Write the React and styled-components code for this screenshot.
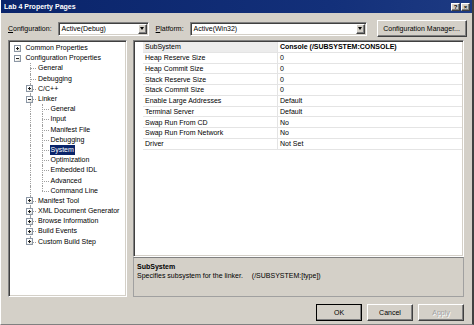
import React from 'react';
import styled, { createGlobalStyle, css } from 'styled-components';

const GlobalStyle = createGlobalStyle`
html, body {
  margin: 0;
  padding: 0;
  background: #d4d0c8;
}
body {
  font-family: "Liberation Sans", Arial, sans-serif;
  font-size: 7px;
  color: #000;
}
`;

const face = '#d4d0c8';

const raised = css`
  border: 1px solid;
  border-color: #fff #404040 #404040 #fff;
  box-shadow: inset -1px -1px 0 #808080, inset 1px 1px 0 ${face};
`;
const sunken = css`
  border: 1px solid;
  border-color: #808080 #fff #fff #808080;
  box-shadow: inset 1px 1px 0 #404040, inset -1px -1px 0 ${face};
`;

const tree = [
  { label: 'Common Properties', closed: true },
  {
    label: 'Configuration Properties',
    children: [
      { label: 'General' },
      { label: 'Debugging' },
      { label: 'C/C++', closed: true },
      {
        label: 'Linker',
        children: [
          { label: 'General' },
          { label: 'Input' },
          { label: 'Manifest File' },
          { label: 'Debugging' },
          { label: 'System', selected: true },
          { label: 'Optimization' },
          { label: 'Embedded IDL' },
          { label: 'Advanced' },
          { label: 'Command Line' },
        ],
      },
      { label: 'Manifest Tool', closed: true },
      { label: 'XML Document Generator', closed: true },
      { label: 'Browse Information', closed: true },
      { label: 'Build Events', closed: true },
      { label: 'Custom Build Step', closed: true },
    ],
  },
];

// flatten nodes into rows, keeping which ancestor columns still carry a line
const flatten = (nodes, level = 0, carry = [], out = []) => {
  nodes.forEach((n, i) => {
    const last = i === nodes.length - 1;
    out.push({ ...n, level, carry, last });
    if (n.children) flatten(n.children, level + 1, [...carry, !last], out);
  });
  return out;
};
const rows = flatten(tree);

const props = [
  ['SubSystem', 'Console (/SUBSYSTEM:CONSOLE)'],
  ['Heap Reserve Size', '0'],
  ['Heap Commit Size', '0'],
  ['Stack Reserve Size', '0'],
  ['Stack Commit Size', '0'],
  ['Enable Large Addresses', 'Default'],
  ['Terminal Server', 'Default'],
  ['Swap Run From CD', 'No'],
  ['Swap Run From Network', 'No'],
  ['Driver', 'Not Set'],
];

const Window = styled.div`
  width: 474px;
  height: 325px;
  box-sizing: border-box;
  display: flex;
  flex-direction: column;
  background: ${face};
  border-left: 1px solid #fff;
  border-right: 2px solid #404040;
  border-bottom: 1px solid #808080;
`;
const TitleBar = styled.div`
  height: 13px;
  flex: none;
  display: flex;
  align-items: center;
  padding: 0 2px 0 3px;
  background: linear-gradient(90deg, #0a246a 0%, #13307a 70%, #1d3a82 100%);
  color: #fff;
  font-weight: bold;
`;
const TitleText = styled.span`
  flex: 1;
`;
const CapButton = styled.span`
  width: 9px;
  height: 8px;
  margin-left: 1px;
  box-sizing: border-box;
  background: ${face};
  ${raised};
  color: #000;
  font-size: 6px;
  font-weight: bold;
  line-height: 6px;
  text-align: center;
`;
const ConfigRow = styled.div`
  display: flex;
  align-items: center;
  height: 17px;
  margin-top: 7px;
  padding-left: 7px;
`;
const Label = styled.span`
  margin-right: ${p => p.$gap}px;
  u { text-decoration: underline; }
`;
const Combo = styled.div`
  width: ${p => p.$w}px;
  height: 14px;
  box-sizing: border-box;
  background: #fff;
  ${sunken};
  display: flex;
  align-items: center;
  padding: 0 1px 0 3px;
  margin-right: ${p => p.$gap}px;
`;
const ComboText = styled.span`
  flex: 1;
`;
const ComboArrow = styled.span`
  width: 9px;
  height: 10px;
  box-sizing: border-box;
  background: ${face};
  ${raised};
  display: flex;
  align-items: center;
  justify-content: center;
  &::after {
    content: '';
    border-left: 2.5px solid transparent;
    border-right: 2.5px solid transparent;
    border-top: 3px solid #000;
  }
`;
const Button = styled.div`
  width: ${p => p.$w}px;
  height: 17px;
  box-sizing: border-box;
  background: ${face};
  ${raised};
  ${p => p.$default && css`
    outline: 1px solid #000;
    outline-offset: -1px;
  `};
  display: flex;
  align-items: center;
  justify-content: center;
  color: ${p => (p.$disabled ? '#a0a0a0' : '#000')};
  text-shadow: ${p => (p.$disabled ? '1px 1px 0 #fff' : 'none')};
`;
const Main = styled.div`
  display: flex;
  gap: 6px;
  height: 257px;
  margin-top: 3px;
  padding: 0 8px 0 7px;
`;
const TreePane = styled.div`
  width: 119px;
  flex: none;
  box-sizing: border-box;
  background: #fff;
  ${sunken};
  padding: 2px 0 0 2px;
`;
const TreeRow = styled.div`
  display: flex;
  align-items: center;
  height: 10.2px;
`;
const Guide = styled.span`
  position: relative;
  width: 12.5px;
  height: 100%;
  flex: none;
  display: flex;
  align-items: center;
  justify-content: center;
  &::before {
    content: ${p => (p.$v ? "''" : 'none')};
    position: absolute;
    left: 6px;
    top: 0;
    bottom: ${p => (p.$v === 'top' ? '50%' : '0')};
    border-left: 1px dotted #a0a0a0;
  }
  &::after {
    content: ${p => (p.$h ? "''" : 'none')};
    position: absolute;
    left: 6px;
    right: 0;
    top: 50%;
    border-top: 1px dotted #a0a0a0;
  }
`;
const Expander = styled.span`
  position: relative;
  z-index: 1;
  width: 7px;
  height: 7px;
  box-sizing: border-box;
  border: 1px solid #8c97a5;
  background: linear-gradient(135deg, #fff 40%, #d8d8d0);
  &::before {
    content: '';
    position: absolute;
    left: 1px;
    right: 1px;
    top: 2px;
    height: 1px;
    background: #222;
  }
  &::after {
    content: ${p => (p.$closed ? "''" : 'none')};
    position: absolute;
    top: 1px;
    bottom: 1px;
    left: 2px;
    width: 1px;
    background: #222;
  }
`;
const NodeText = styled.span`
  padding: 0 1px;
  margin-left: 1px;
  line-height: 10px;
  white-space: nowrap;
  background: ${p => (p.$selected ? '#0a246a' : 'transparent')};
  color: ${p => (p.$selected ? '#fff' : '#000')};
`;
const RightCol = styled.div`
  flex: 1;
  display: flex;
  flex-direction: column;
`;
const GridPane = styled.div`
  flex: 1;
  box-sizing: border-box;
  background: #fff;
  ${sunken};
  padding: 1px 1px 0 0;
  display: grid;
  grid-template-columns: 9px 135px 1fr;
  grid-auto-rows: 10.75px;
  align-content: start;
`;
const Gutter = styled.div``;
const Cell = styled.div`
  display: flex;
  align-items: center;
  padding-left: 2px;
  border-bottom: 1px solid #e4e4e4;
  border-right: ${p => (p.$name ? '1px solid #e4e4e4' : 'none')};
  background: ${p => (p.$active ? '#ececec' : '#fff')};
  font-weight: ${p => (p.$bold ? 'bold' : 'normal')};
  white-space: nowrap;
`;
const DescPane = styled.div`
  height: 40px;
  box-sizing: border-box;
  border: 1px solid #a0a0a0;
  border-top-color: #808080;
  padding: 4px 3px;
  line-height: 9px;
`;
const DescTitle = styled.div`
  font-weight: bold;
`;
const Switch = styled.span`
  margin-left: 9px;
`;
const Footer = styled.div`
  display: flex;
  justify-content: flex-end;
  gap: 5px;
  margin-top: 7px;
  padding-right: 8px;
`;

const TreeNode = ({ row }) => {
  const guides = [];
  for (let k = 0; k < row.level; k++) {
    guides.push(<Guide key={k} $v={k > 0 && row.carry[k] ? 'full' : null} />);
  }
  const own = row.level > 0 ? (row.last ? 'top' : 'full') : null;
  const hasKids = row.closed || row.children;
  return (
    <TreeRow>
      {guides}
      <Guide $v={own} $h={row.level > 0}>
        {hasKids && <Expander $closed={row.closed} />}
      </Guide>
      <NodeText $selected={row.selected}>{row.label}</NodeText>
    </TreeRow>
  );
};

export default function App() {
  return (
    <>
      <GlobalStyle />
      <Window>
        <TitleBar>
          <TitleText>Lab 4 Property Pages</TitleText>
          <CapButton>?</CapButton>
          <CapButton>×</CapButton>
        </TitleBar>
        <ConfigRow>
          <Label $gap={6}><u>C</u>onfiguration:</Label>
          <Combo $w={91} $gap={7}>
            <ComboText>Active(Debug)</ComboText>
            <ComboArrow />
          </Combo>
          <Label $gap={6}><u>P</u>latform:</Label>
          <Combo $w={177} $gap={10}>
            <ComboText>Active(Win32)</ComboText>
            <ComboArrow />
          </Combo>
          <Button $w={90}>Configuration Manager...</Button>
        </ConfigRow>
        <Main>
          <TreePane>
            {rows.map((r, i) => <TreeNode key={i} row={r} />)}
          </TreePane>
          <RightCol>
            <GridPane>
              {props.map(([name, value], i) => (
                <React.Fragment key={name}>
                  <Gutter />
                  <Cell $name $active={i === 0}>{name}</Cell>
                  <Cell $bold={i === 0}>{value}</Cell>
                </React.Fragment>
              ))}
            </GridPane>
            <DescPane>
              <DescTitle>SubSystem</DescTitle>
              <div>
                Specifies subsystem for the linker.
                <Switch>(/SUBSYSTEM:[type])</Switch>
              </div>
            </DescPane>
          </RightCol>
        </Main>
        <Footer>
          <Button $w={46} $default>OK</Button>
          <Button $w={46}>Cancel</Button>
          <Button $w={46} $disabled>Apply</Button>
        </Footer>
      </Window>
    </>
  );
}
